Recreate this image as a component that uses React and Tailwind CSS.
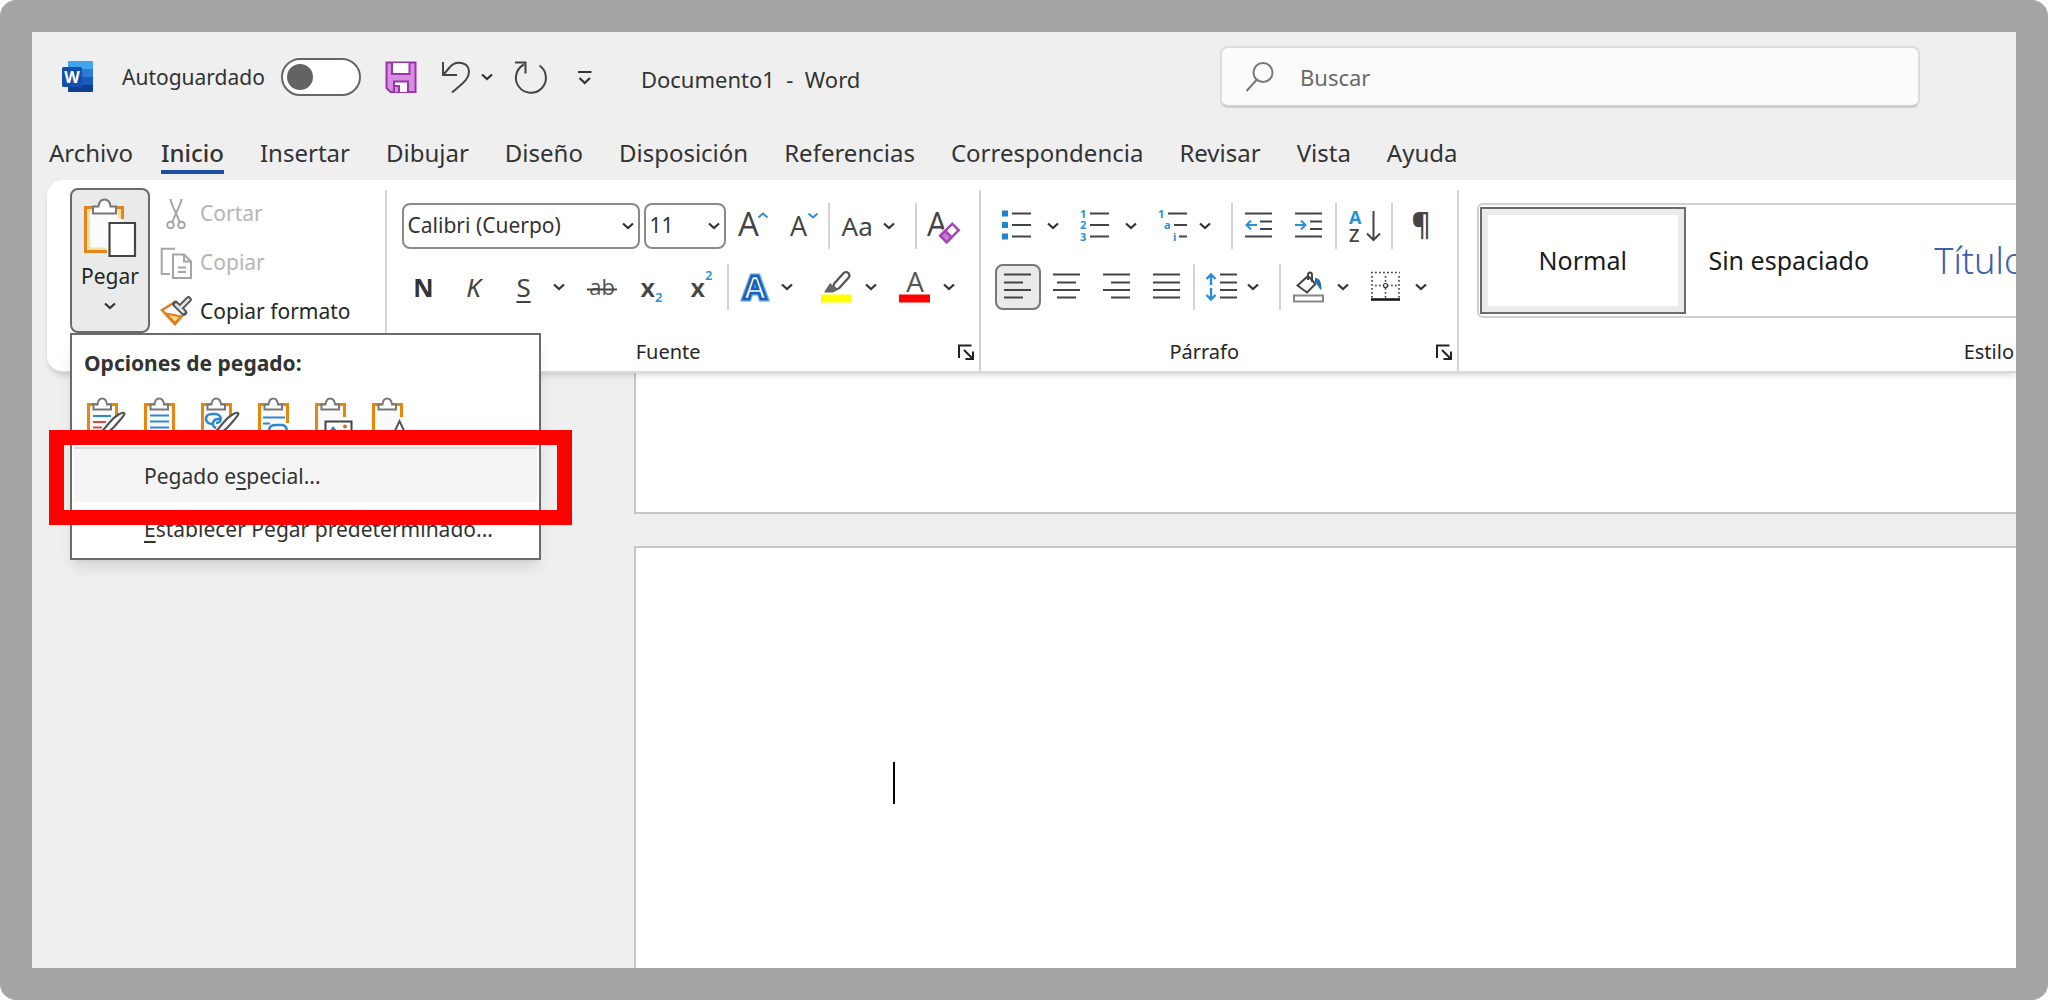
import { useState } from "react";

const tabs = [
  "Archivo",
  "Inicio",
  "Insertar",
  "Dibujar",
  "Diseño",
  "Disposición",
  "Referencias",
  "Correspondencia",
  "Revisar",
  "Vista",
  "Ayuda",
];

const Icon = ({ children, size = 32, className = "" }) => (
  <svg
    width={size}
    height={size}
    viewBox={`0 0 ${size} ${size}`}
    fill="none"
    stroke="#444"
    strokeWidth="2"
    className={`shrink-0 overflow-visible ${className}`}
    aria-hidden="true"
  >
    {children}
  </svg>
);

const ChevronIcon = () => (
  <svg width="12" height="8" viewBox="0 0 12 8" fill="none" stroke="#333" strokeWidth="2.2" aria-hidden="true">
    <path d="M1 1.5 6 6 11 1.5" />
  </svg>
);

const Tool = ({ label, className = "", children }) => (
  <button type="button" aria-label={label} className={`flex shrink-0 items-center justify-center ${className}`}>
    {children}
  </button>
);

const More = ({ label, className = "" }) => (
  <Tool label={`Más: ${label}`} className={`w-5 h-8 ${className}`}>
    <ChevronIcon />
  </Tool>
);

const Sep = ({ className = "" }) => <span className={`h-[46px] w-0.5 shrink-0 bg-[#d4d4d4] ${className}`} />;

const Launcher = ({ label }) => (
  <Tool label={label}>
    <Icon size={16}>
      <path d="M1 14V1.5H13.5M6 6l8.5 8.5M15 7.5V15H7.5" stroke="#222" />
    </Icon>
  </Tool>
);

/* ---------- Title bar ---------- */

const WordLogo = () => (
  <Icon>
    <g stroke="none">
      <rect x="6" y="0" width="25" height="31" rx="1.5" fill="#2b7cd3" />
      <path d="M6 8V1.5Q6 0 7.500 0H29.500Q31 0 31 1.500V8Z" fill="#41a5ee" />
      <path d="M6 16H31V23.500H6Z" fill="#185abd" />
      <path d="M6 23.500H31V29.500Q31 31 29.500 31H7.500Q6 31 6 29.500Z" fill="#103f91" />
      <rect x="0" y="6" width="20" height="20" rx="1.5" fill="#1650ae" />
      <text x="10" y="21.500" textAnchor="middle" fill="#fff" className="font-['Open_Sans'] text-[16px] font-bold">
        W
      </text>
    </g>
  </Icon>
);

const TitleBar = () => {
  const [autosave, setAutosave] = useState(false);

  return (
    <header className="flex h-[90px] items-center pl-[30px] text-[21px] text-[#333]">
      <WordLogo />
      <label htmlFor="autosave" className="ml-7 pt-0.5">
        Autoguardado
      </label>
      <input
        id="autosave"
        type="checkbox"
        checked={autosave}
        onChange={(e) => setAutosave(e.target.checked)}
        className="ml-4 flex h-[38px] w-20 shrink-0 appearance-none items-center rounded-full border-2 border-[#666] bg-white px-1 before:size-[26px] before:rounded-full before:bg-[#636363] checked:justify-end"
      />
      <Tool label="Guardar" className="ml-6">
        <Icon>
          <path d="M1.500 1.500H30.500V31H5.500L1.500 27Z" fill="#d68fe0" stroke="#9a35a8" />
          <path d="M7 2V13H24.500V2" fill="#fff" stroke="#9a35a8" />
          <path d="M9 31V20.500H23V31" fill="#fff" stroke="#9a35a8" />
          <path d="M9 31V25H14V31" fill="#d68fe0" stroke="#9a35a8" />
        </Icon>
      </Tool>
      <Tool label="Deshacer" className="ml-5.5">
        <Icon>
          <path d="M4 1V14H18M4.500 13.500 11 6C16 -.5 30 0 30 11 30 18 24 22 13 31.500" />
        </Icon>
      </Tool>
      <More label="Deshacer" className="ml-1.5" />
      <Tool label="Rehacer" className="ml-4">
        <Icon>
          <path d="M2 1.500H12.500V12.500M11 3.500A15 15 0 1 0 26.500 4.500" />
        </Icon>
      </Tool>
      <Tool label="Personalizar barra de acceso rápido" className="ml-6">
        <Icon>
          <path d="M9 11H22.500M10.500 17 15.700 22 21 17" stroke="#333" strokeWidth="2.2" />
        </Icon>
      </Tool>
      <h1 className="ml-10 flex-1 whitespace-pre pt-1 text-[22px]">{"Documento1  -  Word"}</h1>
      <label className="mr-24 flex h-[62px] w-[700px] items-center rounded-lg border-2 border-b-3 border-[#dcdcdc] border-b-[#cfcfcf] bg-[#fbfbfb] pl-[22px]">
        <Icon>
          <circle cx="19" cy="11.500" r="9.500" stroke="#777" />
          <path d="M12.500 19 2.500 30" stroke="#777" />
        </Icon>
        <input
          type="search"
          placeholder="Buscar"
          aria-label="Buscar"
          className="ml-6 min-w-0 flex-1 bg-transparent pt-0.5 text-[22px] outline-none placeholder:text-[#6a6a6a]"
        />
      </label>
    </header>
  );
};

const Tabs = ({ active, onSelect }) => (
  <nav className="flex gap-9 pl-[17px] pt-[15px] text-[24px] leading-8 text-[#333]">
    {tabs.map((tab) => (
      <button
        key={tab}
        type="button"
        onClick={() => onSelect(tab)}
        className={`mb-1.5 border-b-4 pb-px first:-mr-2 ${
          tab === active ? "border-[#1d4fa3] font-medium" : "border-transparent"
        }`}
      >
        {tab}
      </button>
    ))}
  </nav>
);

/* ---------- Paste menu ---------- */

const PasteIcon = ({ cut, children }) => (
  <Icon size={40}>
    <path d={cut ? "M30.500 20V7.500H2.500V38H18" : "M30.500 7.500H2.500V38H30.500Z"} stroke="#e8860c" strokeWidth="3" fill="#fafafa" />
    <path d="M7.500 12.500V7.500H11.500C12 3 13.500 1.500 16.200 1.500S20.500 3 21 7.500H25V12.500Z" stroke="#777" fill="#fff" />
    {children}
  </Icon>
);

const Brush = () => (
  <path d="M13 38 24 25C30 18 36 15 38 16S34 23 28 30L20 37Z" fill="#fff" stroke="#555" strokeWidth="2.200" />
);

const pasteOptions = [
  {
    label: "Mantener formato de origen",
    icon: (
      <PasteIcon cut>
        <path d="M7 19H25" stroke="#2b88d0" />
        <path d="M7 25H20M7 30.500H16" stroke="#e04848" />
        <Brush />
      </PasteIcon>
    ),
  },
  {
    label: "Usar estilos de destino",
    icon: (
      <PasteIcon>
        <path d="M7 18.500H26M7 24.500H26M7 30.500H26" stroke="#2b88d0" />
      </PasteIcon>
    ),
  },
  {
    label: "Vincular y mantener formato de origen",
    icon: (
      <PasteIcon cut>
        <path d="M12 27C4 26 4 17 12 17H15C22 17 23 26 16 26M20 22C12 21 11 29 16 31" stroke="#2b88d0" strokeWidth="2.500" />
        <Brush />
      </PasteIcon>
    ),
  },
  {
    label: "Vincular y usar estilos de destino",
    icon: (
      <PasteIcon cut>
        <path d="M30.500 20V26" stroke="#e8860c" strokeWidth="3" />
        <path d="M6 20.500H28M6 26.500H13" stroke="#2b88d0" />
        <path d="M13 36C10 28 17 28 19 28H25C28 28 30 31 30 34" stroke="#2b88d0" strokeWidth="2.500" />
      </PasteIcon>
    ),
  },
  {
    label: "Imagen",
    icon: (
      <PasteIcon cut>
        <rect x="11.500" y="24.500" width="26" height="14" fill="#fff" stroke="#444" />
        <path d="M14 36 19 29 25 36Z" fill="#2b88d0" stroke="none" />
        <circle cx="31" cy="29.500" r="2" fill="#e8662c" stroke="none" />
      </PasteIcon>
    ),
  },
  {
    label: "Conservar solo texto",
    icon: (
      <PasteIcon cut>
        <path d="M21 40 28.500 24 36 40" fill="#fff" stroke="#555" />
      </PasteIcon>
    ),
  },
];

const PasteMenu = () => (
  <div role="menu" className="absolute left-0 top-[145px] z-20 w-[471px] border-2 border-[#6b6b6b] bg-white pb-[3px] text-[21px] leading-7 text-[#333] shadow-lg">
    <p className="px-3 pt-3.5 font-bold text-[#333]">Opciones de pegado:</p>
    <div className="mt-5 flex gap-[17px] px-3.5">
      {pasteOptions.map(({ label, icon }) => (
        <Tool key={label} label={label}>
          {icon}
        </Tool>
      ))}
    </div>
    <div className="mx-0.5 mt-2.5 border-t-2 border-[#d8d8d8]">
      <button type="button" role="menuitem" className="flex h-[53px] w-full items-center bg-[#f4f4f4] pl-[70px]">
        <span>
          Pegado e<u className="underline-offset-4">s</u>pecial...
        </span>
      </button>
      <button type="button" role="menuitem" className="flex h-[53px] w-full items-center pl-[70px]">
        <span>
          <u className="underline-offset-4">E</u>stablecer Pegar predeterminado...
        </span>
      </button>
    </div>
    <span className="pointer-events-none absolute -left-[23px] top-[95px] h-[95px] w-[523px] border-[15px] border-[#fe0000]" />
  </div>
);

/* ---------- Ribbon groups ---------- */

const ClipboardGroup = () => (
  <section aria-label="Portapapeles" className="relative flex shrink-0 gap-2.5 text-[21px] text-[#262626]">
    <button
      type="button"
      className="flex h-[145px] w-20 flex-col items-center rounded-lg border-2 border-[#6b6b6b] bg-[#eaeaea] pt-2 leading-7"
    >
      <svg width="54" height="60" viewBox="0 0 54 60" fill="none" aria-hidden="true">
        <path d="M2.500 9.500H39.500V54H2.500Z" fill="#fbfbfb" />
        <path d="M5.500 51V12H36.500V20M5.500 51H23" stroke="#fbdc94" strokeWidth="3" />
        <path d="M24 53.500H2.500V9.500H39.500V21" stroke="#e0861c" strokeWidth="3" />
        <path d="M10 15.500V8.500H15.500C16 3.500 18.500 1.500 21.500 1.500S27 3.500 27.500 8.500H33V15.500Z" stroke="#777" strokeWidth="2" fill="#fff" />
        <path d="M26.500 25H52V58H26.500Z" fill="#fff" stroke="#444" strokeWidth="2.200" />
      </svg>
      <span className="mt-1">Pegar</span>
      <span className="mt-3">
        <ChevronIcon />
      </span>
    </button>
    <div className="pr-[34px] pt-px">
      <button type="button" disabled className="flex h-[49px] items-center gap-2 text-[#b5b5b5]">
        <Icon>
          <g stroke="#a5a5a5">
            <path d="M10.500 1C11 7 15 11 19.500 24M21.500 1C21 7 17 11 12.500 24" />
            <circle cx="10.500" cy="27" r="3.300" />
            <circle cx="21.500" cy="27" r="3.300" />
          </g>
        </Icon>
        Cortar
      </button>
      <button type="button" disabled className="flex h-[49px] items-center gap-2 text-[#b5b5b5]">
        <Icon>
          <path d="M15 1.700H1.700V27H10M13 7.500H24L31 14.500V31H13ZM24 8V14.500H31M18 20.500H26M18 25H26" stroke="#a5a5a5" />
        </Icon>
        Copiar
      </button>
      <button type="button" className="flex h-[49px] items-center gap-2">
        <Icon>
          <path d="M2 14 13.500 7 24 17.500 15 28Z" fill="#fff" stroke="#e57c1a" strokeWidth="2.500" />
          <path d="M6 17.500 21 20.500 15 27Z" fill="#fbdc94" stroke="#e57c1a" />
          <path d="M15.500 8 24 16.500M20 12 28.500 3.500" stroke="#555" strokeWidth="6.500" strokeLinecap="round" />
          <path d="M16 8.500 23.500 16M20 12 28.500 3.500" stroke="#e4e4e4" strokeWidth="2.500" strokeLinecap="round" />
        </Icon>
        Copiar formato
      </button>
    </div>
    <PasteMenu />
  </section>
);

const Combo = ({ label, value, className }) => (
  <div className={`relative shrink-0 ${className}`}>
    <select
      aria-label={label}
      defaultValue={value}
      className="h-[46px] w-full appearance-none rounded-lg border-2 border-[#8a8a8a] bg-white pl-1 text-[21px] text-[#333]"
    >
      <option>{value}</option>
    </select>
    <span className="pointer-events-none absolute inset-y-0 right-1.5 flex items-center">
      <ChevronIcon />
    </span>
  </div>
);

const GroupLabel = ({ children, launcher }) => (
  <footer className="mt-8 flex items-center pr-[5px] text-[20px] leading-5 text-[#262626]">
    <span className="mr-2 flex-1 text-center">{children}</span>
    <Launcher label={launcher} />
  </footer>
);

const letter = "font-['Open_Sans'] font-normal";

const FontGroup = () => (
  <section aria-label="Fuente" className="mt-0.5 flex shrink-0 flex-col border-x-2 border-[#d4d4d4] pt-[13px] text-[#444]">
    <div className="flex h-[46px] items-center pl-[15px] pr-5">
      <Combo label="Nombre de fuente" value="Calibri (Cuerpo)" className="w-[238px]" />
      <Combo label="Tamaño de fuente" value="11" className="ml-1 w-[82px]" />
      <Tool label="Aumentar tamaño de fuente" className="ml-2.5">
        <Icon>
          <text x="2" y="26" fill="#444" stroke="none" className={`${letter} text-[33px]`}>A</text>
          <path d="M22.500 7.500 27 3.500 31.500 7.500" stroke="#2b8fd6" />
        </Icon>
      </Tool>
      <Tool label="Disminuir tamaño de fuente" className="ml-4.5">
        <Icon>
          <text x="4" y="26" fill="#444" stroke="none" className={`${letter} text-[27px]`}>A</text>
          <path d="M22.500 3.500 27 7.500 31.500 3.500" stroke="#2b8fd6" />
        </Icon>
      </Tool>
      <Sep className="ml-2.5" />
      <Tool label="Cambiar mayúsculas y minúsculas" className="ml-3 gap-2.5 text-[26px] leading-8">
        Aa
        <ChevronIcon />
      </Tool>
      <Sep className="ml-5" />
      <Tool label="Borrar todo el formato" className="ml-2.5">
        <Icon>
          <text x="0" y="26" fill="#444" stroke="none" className={`${letter} text-[32px]`}>A</text>
          <g transform="rotate(-45 22.500 23)">
            <rect x="13" y="17" width="19" height="11" fill="#fff" stroke="#fff" />
            <rect x="14" y="18.500" width="17" height="9" fill="#fff" stroke="#a347b5" strokeWidth="2.500" />
            <rect x="14" y="18.500" width="7" height="9" fill="#c77fd3" stroke="#a347b5" strokeWidth="2.500" />
          </g>
        </Icon>
      </Tool>
    </div>
    <div className="mt-[15px] flex h-[46px] items-center pl-3 text-[26px] leading-8">
      <Tool label="Negrita" className="w-[50px] text-[25px] font-bold text-[#333]">N</Tool>
      <Tool label="Cursiva" className="w-[50px] italic">K</Tool>
      <Tool label="Subrayado" className="w-[50px] underline underline-offset-4">S</Tool>
      <More label="Subrayado" />
      <Tool label="Tachado" className="ml-2 w-[50px]">
        <Icon>
          <text x="16" y="24" textAnchor="middle" fill="#555" stroke="none" className={`${letter} text-[22px]`}>ab</text>
          <path d="M1 18.500H31" />
        </Icon>
      </Tool>
      <Tool label="Subíndice" className="w-[50px]">
        <span className="font-semibold">x</span>
        <sub className="-bottom-2.5 text-[13px] font-semibold text-[#2b8fd6]">2</sub>
      </Tool>
      <Tool label="Superíndice" className="w-[50px]">
        <span className="font-semibold">x</span>
        <sup className="-top-3 text-[13px] font-semibold text-[#2b8fd6]">2</sup>
      </Tool>
      <Sep />
      <Tool label="Efectos de texto y tipografía" className="ml-2.5">
        <Icon>
          <g className="font-['Open_Sans'] text-[33px] font-bold" textAnchor="middle">
            <text x="16" y="28" fill="none" stroke="#5aa9e6" strokeWidth="5">A</text>
            <text x="16" y="28" fill="#fff" stroke="#1b5fb4" strokeWidth="2.500">A</text>
          </g>
        </Icon>
      </Tool>
      <More label="Efectos de texto" className="ml-1.5" />
      <Tool label="Color de resaltado del texto" className="ml-6">
        <Icon>
          <rect x="0" y="23.500" width="31" height="8" fill="#ff0" stroke="none" />
          <path d="M16 14.500 25 4.500" stroke="#555" strokeWidth="9" strokeLinecap="round" />
          <path d="M16 14.500 25 4.500" stroke="#fff" strokeWidth="4.500" strokeLinecap="round" />
          <path d="M3 21.500 9 12 17 19 12 21.500Z" fill="#666" stroke="none" />
        </Icon>
      </Tool>
      <More label="Color de resaltado" className="ml-2" />
      <Tool label="Color de fuente" className="ml-4.5">
        <Icon>
          <text x="16" y="21" textAnchor="middle" fill="#555" stroke="none" className={`${letter} text-[28px]`}>A</text>
          <rect x="0" y="23.500" width="31" height="8" fill="#f00" stroke="none" />
        </Icon>
      </Tool>
      <More label="Color de fuente" className="ml-2" />
    </div>
    <GroupLabel launcher="Configuración de fuente">Fuente</GroupLabel>
  </section>
);

const listMark = "font-['Open_Sans'] text-[11px] font-bold";

const ParagraphGroup = () => (
  <section aria-label="Párrafo" className="mt-0.5 flex shrink-0 flex-col border-r-2 border-[#d4d4d4] pt-[13px]">
    <div className="flex h-[46px] items-center pl-5 pr-5">
      <Tool label="Viñetas">
        <Icon>
          <path d="M1 .5h6v6h-6ZM1 12h6v6h-6ZM1 23.500h6v6h-6Z" fill="#1f86c9" stroke="none" />
          <path d="M11 3.500H30M11 15H30M11 26.500H30" />
        </Icon>
      </Tool>
      <More label="Viñetas" className="ml-2.5" />
      <Tool label="Numeración" className="ml-4">
        <Icon>
          <g fill="#2b8fd6" stroke="none" className={listMark}>
            <text x="1" y="8">1</text>
            <text x="1" y="19">2</text>
            <text x="1" y="31">3</text>
          </g>
          <path d="M11 3.500H30M11 15H30M11 26.500H30" />
        </Icon>
      </Tool>
      <More label="Numeración" className="ml-2.5" />
      <Tool label="Lista multinivel" className="ml-4">
        <Icon>
          <g fill="#2b8fd6" stroke="none" className={listMark}>
            <text x="1" y="8">1</text>
            <text x="7" y="19">a</text>
            <text x="16" y="31">i</text>
          </g>
          <path d="M11 3.500H30M17 15H30M22 26.500H30" />
        </Icon>
      </Tool>
      <More label="Lista multinivel" className="ml-1.5" />
      <Sep className="ml-4" />
      <Tool label="Disminuir sangría" className="ml-2.5">
        <Icon>
          <path d="M2 3.500H29M17 11.500H29M17 19H29M2 26.500H29" />
          <path d="M14 15H4M8 10.500 3.500 15 8 19.500" stroke="#2b8fd6" />
        </Icon>
      </Tool>
      <Tool label="Aumentar sangría" className="ml-4.5">
        <Icon>
          <path d="M2 3.500H29M17 11.500H29M17 19H29M2 26.500H29" />
          <path d="M2 15H12M8 10.500 12.500 15 8 19.500" stroke="#2b8fd6" />
        </Icon>
      </Tool>
      <Sep className="ml-2.5" />
      <Tool label="Ordenar" className="ml-3">
        <Icon>
          <g stroke="none" className="font-['Open_Sans'] text-[18px]">
            <text x="0" y="14" fill="#2b8fd6" className="font-bold">A</text>
            <text x="0" y="32" fill="#444" className="font-semibold">Z</text>
          </g>
          <path d="M24.500 1V30M18 23.500 24.500 30 31 23.500" />
        </Icon>
      </Tool>
      <Sep className="ml-2.5" />
      <Tool label="Mostrar todo" className="ml-3">
        <Icon>
          <text x="16" y="25" textAnchor="middle" fill="#444" stroke="none" className="font-['Open_Sans'] text-[30px] font-semibold">¶</text>
        </Icon>
      </Tool>
    </div>
    <div className="mt-[15px] flex h-[46px] items-center pl-3.5">
      <Tool label="Alinear a la izquierda" className="size-[46px] rounded-lg border-2 border-[#777] bg-[#eaeaea]">
        <Icon>
          <path d="M2 3.500H29M2 11.500H21M2 19H29M2 26.500H21" />
        </Icon>
      </Tool>
      <Tool label="Centrar" className="ml-2.5">
        <Icon>
          <path d="M2 3.500H29M6 11.500H25M2 19H29M6 26.500H25" />
        </Icon>
      </Tool>
      <Tool label="Alinear a la derecha" className="ml-4.5">
        <Icon>
          <path d="M2 3.500H29M10 11.500H29M2 19H29M10 26.500H29" />
        </Icon>
      </Tool>
      <Tool label="Justificar" className="ml-4.5">
        <Icon>
          <path d="M2 3.500H29M2 11.500H29M2 19H29M2 26.500H29" />
        </Icon>
      </Tool>
      <Sep className="ml-2.5" />
      <Tool label="Espaciado entre líneas y párrafos" className="ml-2.5">
        <Icon>
          <path d="M6 14V3.500M1.500 8 6 3.500 10.500 8M6 17V28M1.500 24 6 28.500 10.500 24" stroke="#2b8fd6" strokeWidth="2.400" />
          <path d="M15 3.500H32M15 11.500H32M15 19H32M15 26.500H32" />
        </Icon>
      </Tool>
      <More label="Espaciado" className="ml-1.5" />
      <Sep className="ml-4" />
      <Tool label="Sombreado" className="ml-3">
        <Icon>
          <rect x="1" y="24.500" width="29" height="6" stroke="#888" fill="#fff" />
          <path d="M4.500 14.500 15 5 22.500 13 14 21.500ZM15 9V4C15 .5 19 .5 19 4V11" />
          <path d="M22 7C27 7 28.500 11 28.500 19 25 17 25 13 22 11Z" fill="#1f6fb8" stroke="none" />
        </Icon>
      </Tool>
      <More label="Sombreado" className="ml-2" />
      <Tool label="Bordes" className="ml-4.5">
        <Icon>
          <path
            d="M0 1.500H29M1 5V28M28 5V28M14.500 5V28M4 14.500H27"
            stroke="#444"
            strokeWidth="1.600"
            strokeDasharray="1.800 2.200"
          />
          <circle cx="14.500" cy="14.500" r="2" stroke="#333" strokeWidth="1.200" fill="#fff" />
          <path d="M0 28.500H29" stroke="#111" strokeWidth="2.500" />
        </Icon>
      </Tool>
      <More label="Bordes" className="ml-2" />
    </div>
    <GroupLabel launcher="Configuración de párrafo">Párrafo</GroupLabel>
  </section>
);

const StylesGroup = () => (
  <section aria-label="Estilos" className="mt-0.5 flex min-w-0 flex-1 flex-col overflow-hidden pl-[18px] pt-[13px]">
    <div className="flex h-[115px] rounded-l-md border-2 border-r-0 border-[#d0d0d0] p-0.5 pl-px text-[25px] text-[#1a1a1a]">
      <button type="button" className="w-[206px] shrink-0 border-2 border-[#6b6b6b] bg-[#ebebeb] p-1.5">
        <span className="flex h-full items-center justify-center bg-white">Normal</span>
      </button>
      <button type="button" className="w-[206px] shrink-0">
        Sin espaciado
      </button>
      <button type="button" className="w-[206px] shrink-0 text-[36px] font-light text-[#3f5fa6]">
        Título 1
      </button>
    </div>
    <footer className="mt-6 pr-0.5 text-right text-[20px] leading-5 text-[#262626]">Estilo</footer>
  </section>
);

const Ribbon = () => (
  <div className="relative z-10 ml-[15px] flex h-[193px] rounded-l-2xl border-b-2 border-[#dadada] bg-white pl-[23px] pt-2 shadow-md">
    <ClipboardGroup />
    <FontGroup />
    <ParagraphGroup />
    <StylesGroup />
  </div>
);

const Document = () => (
  <main className="flex flex-1 flex-col pl-[602px]">
    <div className="h-[141px] border-b-2 border-l-2 border-[#c6c6c6] bg-white" />
    <div className="mt-8 flex-1 border-l-2 border-t-2 border-[#c6c6c6] bg-white pl-[257px] pt-[214px]">
      <span className="block h-[42px] w-0.5 bg-black" />
    </div>
  </main>
);

const App = () => {
  const [activeTab, setActiveTab] = useState("Inicio");

  return (
    <div className="flex min-h-screen flex-col overflow-hidden rounded-2xl border-32 border-[#a5a5a5] bg-[#efefef] font-['Noto_Sans','Open_Sans',sans-serif]">
      <TitleBar />
      <Tabs active={activeTab} onSelect={setActiveTab} />
      <Ribbon />
      <Document />
    </div>
  );
};

export default App;
